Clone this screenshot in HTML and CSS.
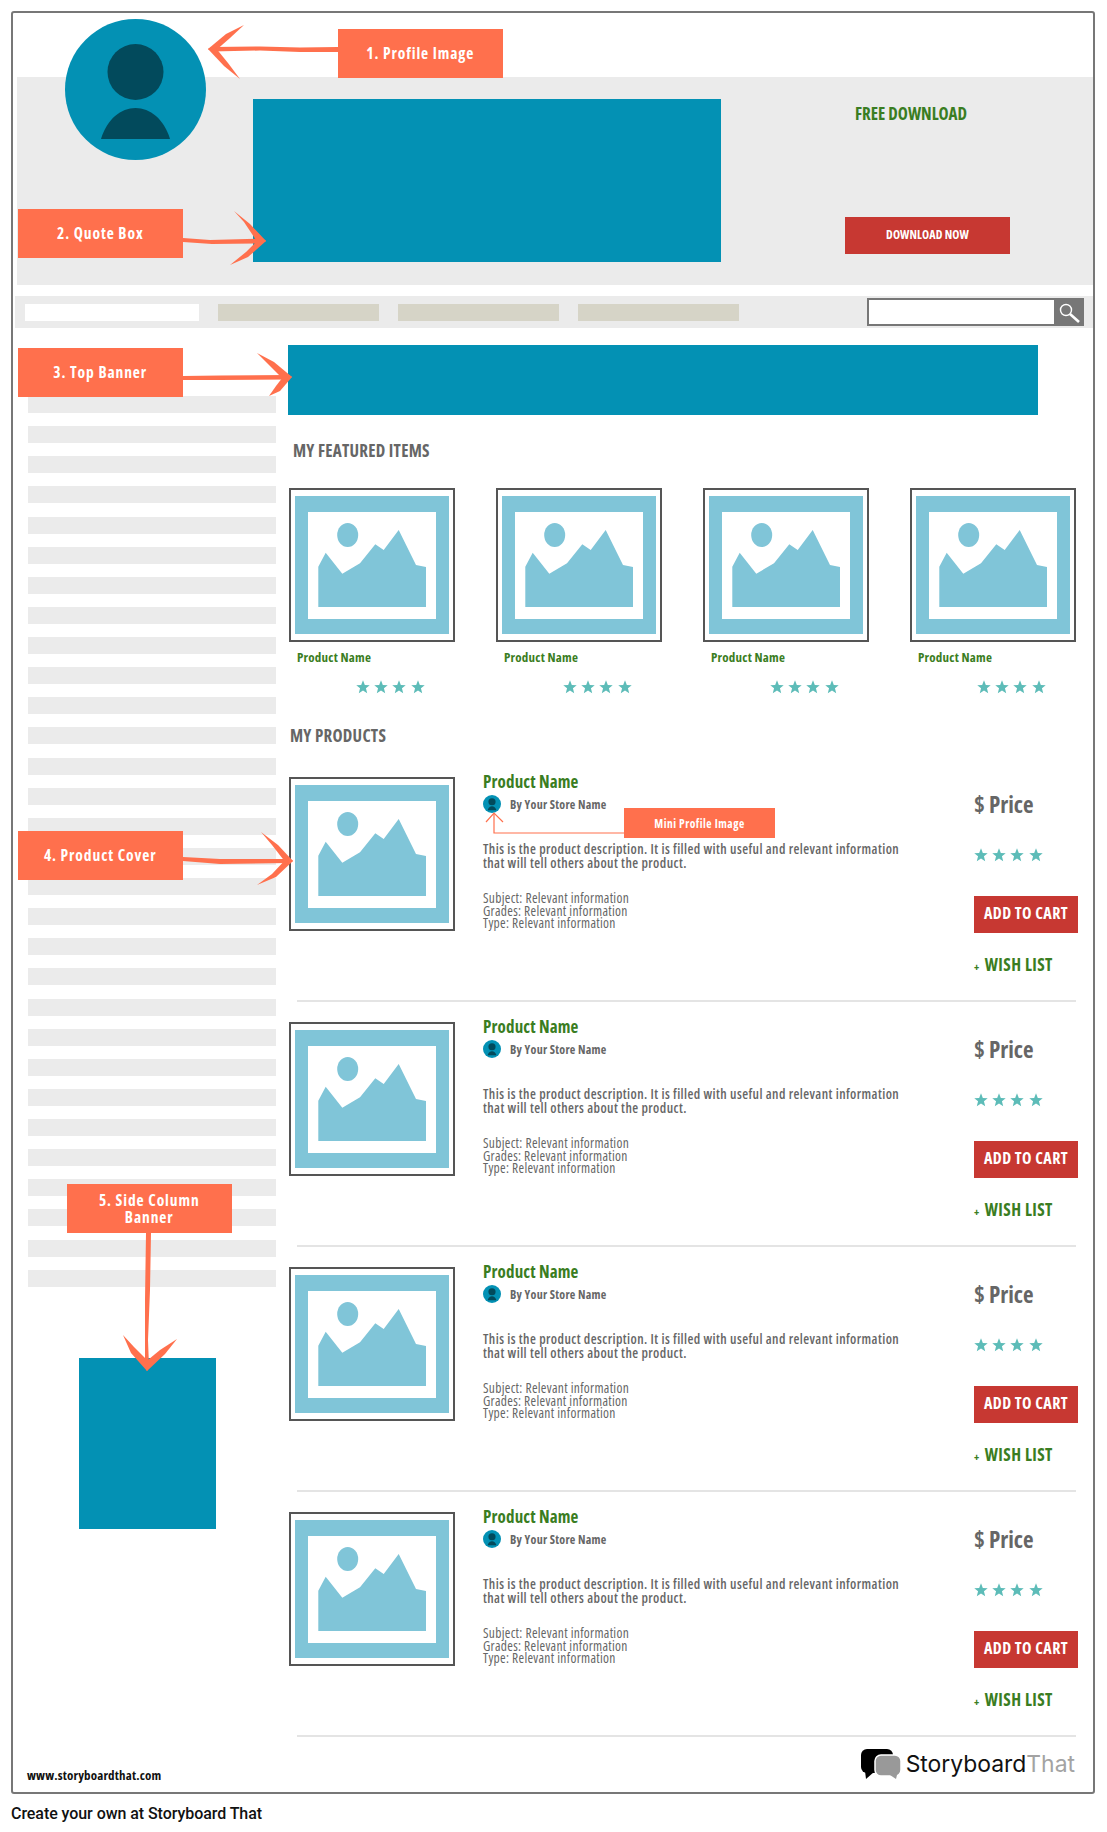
FILE: index.html
```html
<!DOCTYPE html>
<html lang="en">
<head>
    <meta charset="UTF-8">
    <title>Teacher Store Template</title>
    <link rel="stylesheet" href="styles.css">
</head>
<body>
    <svg class="defs" width="0" height="0">
        <symbol id="person" viewBox="0 0 141 141">
            <circle cx="70.5" cy="70.5" r="70.5" fill="#0391b4"/>
            <ellipse cx="70.5" cy="53" rx="28" ry="28" fill="#024a5c"/>
            <path d="M36 120 C42 100 56 89 70.5 89 C85 89 99 100 105 120 Z" fill="#024a5c"/>
        </symbol>
        <symbol id="picture" viewBox="0 0 154 138">
            <rect width="154" height="138" fill="#80c5d8"/>
            <rect x="13" y="16" width="128" height="107" fill="#fff"/>
            <ellipse cx="52.7" cy="39" rx="10.5" ry="12" fill="#80c5d8"/>
            <polygon points="23.3,70.7 30.7,56.7 47.3,77.7 65,67.3 80.3,48.3 88.7,54 103.7,34 121,69 131,71 131,111 23.3,111" fill="#80c5d8"/>
        </symbol>
        <symbol id="star" viewBox="0 0 20 20">
            <polygon points="10,0.5 12.6,7 19.6,7.4 14.2,11.9 16,18.9 10,15.1 4,18.9 5.8,11.9 0.4,7.4 7.4,7" fill="#5dbcb8"/>
        </symbol>
    </svg>

    <div class="page">
        <div class="frame">
            <div class="hero">
                <svg class="profile"><use href="#person"/></svg>
                <div class="quote"></div>
                <div class="offer">
                    <div class="offer-title">FREE DOWNLOAD</div>
                    <div class="download-btn">DOWNLOAD NOW</div>
                </div>
            </div>

            <div class="nav">
                <div class="nav-item nav-active"></div>
                <div class="nav-item"></div>
                <div class="nav-item"></div>
                <div class="nav-item"></div>
                <div class="search">
                    <div class="search-input"></div>
                    <div class="search-btn">
                        <svg width="28" height="28" viewBox="0 0 28 28">
                            <circle cx="10" cy="12" r="5.5" fill="none" stroke="#fff" stroke-width="1.4"/>
                            <line x1="14" y1="16" x2="23" y2="24" stroke="#fff" stroke-width="2.6"/>
                        </svg>
                    </div>
                </div>
            </div>

            <div class="main">
                <div class="side">
                    <div class="side-lines">
                        <div class="line"></div><div class="line"></div><div class="line"></div><div class="line"></div><div class="line"></div>
                        <div class="line"></div><div class="line"></div><div class="line"></div><div class="line"></div><div class="line"></div>
                        <div class="line"></div><div class="line"></div><div class="line"></div><div class="line"></div><div class="line"></div>
                        <div class="line"></div><div class="line"></div><div class="line"></div><div class="line"></div><div class="line"></div>
                        <div class="line"></div><div class="line"></div><div class="line"></div><div class="line"></div><div class="line"></div>
                        <div class="line"></div><div class="line"></div><div class="line"></div><div class="line"></div><div class="line"></div>
                    </div>
                    <div class="side-banner"></div>
                </div>

                <div class="content">
                    <div class="top-banner"></div>
                    <h2 class="section-title featured-title">MY FEATURED ITEMS</h2>

                    <div class="featured">
                        <div class="item">
                            <div class="cover"><svg><use href="#picture"/></svg></div>
                            <div class="item-name">Product Name</div>
                            <div class="stars item-stars"><svg><use href="#star"/></svg><svg><use href="#star"/></svg><svg><use href="#star"/></svg><svg><use href="#star"/></svg></div>
                        </div>
                        <div class="item">
                            <div class="cover"><svg><use href="#picture"/></svg></div>
                            <div class="item-name">Product Name</div>
                            <div class="stars item-stars"><svg><use href="#star"/></svg><svg><use href="#star"/></svg><svg><use href="#star"/></svg><svg><use href="#star"/></svg></div>
                        </div>
                        <div class="item">
                            <div class="cover"><svg><use href="#picture"/></svg></div>
                            <div class="item-name">Product Name</div>
                            <div class="stars item-stars"><svg><use href="#star"/></svg><svg><use href="#star"/></svg><svg><use href="#star"/></svg><svg><use href="#star"/></svg></div>
                        </div>
                        <div class="item">
                            <div class="cover"><svg><use href="#picture"/></svg></div>
                            <div class="item-name">Product Name</div>
                            <div class="stars item-stars"><svg><use href="#star"/></svg><svg><use href="#star"/></svg><svg><use href="#star"/></svg><svg><use href="#star"/></svg></div>
                        </div>
                    </div>

                    <h2 class="section-title products-title">MY PRODUCTS</h2>

                    <div class="products">
                        <div class="product">
                            <div class="cover"><svg><use href="#picture"/></svg></div>
                            <div class="product-body">
                                <div class="product-name">Product Name</div>
                                <div class="author"><svg><use href="#person"/></svg><span>By Your Store Name</span></div>
                                <p class="desc">This is the product description. It is filled with useful and relevant information<br>that will tell others about the product.</p>
                                <p class="meta">Subject: Relevant information<br>Grades: Relevant information<br>Type: Relevant information</p>
                            </div>
                            <div class="product-actions">
                                <div class="price">$ Price</div>
                                <div class="stars action-stars"><svg><use href="#star"/></svg><svg><use href="#star"/></svg><svg><use href="#star"/></svg><svg><use href="#star"/></svg></div>
                                <div class="cart-btn">ADD TO CART</div>
                                <div class="wish"><span class="plus">+</span> WISH LIST</div>
                            </div>
                        </div>
                        <div class="divider"></div>

                        <div class="product">
                            <div class="cover"><svg><use href="#picture"/></svg></div>
                            <div class="product-body">
                                <div class="product-name">Product Name</div>
                                <div class="author"><svg><use href="#person"/></svg><span>By Your Store Name</span></div>
                                <p class="desc">This is the product description. It is filled with useful and relevant information<br>that will tell others about the product.</p>
                                <p class="meta">Subject: Relevant information<br>Grades: Relevant information<br>Type: Relevant information</p>
                            </div>
                            <div class="product-actions">
                                <div class="price">$ Price</div>
                                <div class="stars action-stars"><svg><use href="#star"/></svg><svg><use href="#star"/></svg><svg><use href="#star"/></svg><svg><use href="#star"/></svg></div>
                                <div class="cart-btn">ADD TO CART</div>
                                <div class="wish"><span class="plus">+</span> WISH LIST</div>
                            </div>
                        </div>
                        <div class="divider"></div>

                        <div class="product">
                            <div class="cover"><svg><use href="#picture"/></svg></div>
                            <div class="product-body">
                                <div class="product-name">Product Name</div>
                                <div class="author"><svg><use href="#person"/></svg><span>By Your Store Name</span></div>
                                <p class="desc">This is the product description. It is filled with useful and relevant information<br>that will tell others about the product.</p>
                                <p class="meta">Subject: Relevant information<br>Grades: Relevant information<br>Type: Relevant information</p>
                            </div>
                            <div class="product-actions">
                                <div class="price">$ Price</div>
                                <div class="stars action-stars"><svg><use href="#star"/></svg><svg><use href="#star"/></svg><svg><use href="#star"/></svg><svg><use href="#star"/></svg></div>
                                <div class="cart-btn">ADD TO CART</div>
                                <div class="wish"><span class="plus">+</span> WISH LIST</div>
                            </div>
                        </div>
                        <div class="divider"></div>

                        <div class="product">
                            <div class="cover"><svg><use href="#picture"/></svg></div>
                            <div class="product-body">
                                <div class="product-name">Product Name</div>
                                <div class="author"><svg><use href="#person"/></svg><span>By Your Store Name</span></div>
                                <p class="desc">This is the product description. It is filled with useful and relevant information<br>that will tell others about the product.</p>
                                <p class="meta">Subject: Relevant information<br>Grades: Relevant information<br>Type: Relevant information</p>
                            </div>
                            <div class="product-actions">
                                <div class="price">$ Price</div>
                                <div class="stars action-stars"><svg><use href="#star"/></svg><svg><use href="#star"/></svg><svg><use href="#star"/></svg><svg><use href="#star"/></svg></div>
                                <div class="cart-btn">ADD TO CART</div>
                                <div class="wish"><span class="plus">+</span> WISH LIST</div>
                            </div>
                        </div>
                        <div class="divider last"></div>
                    </div>
                </div>
            </div>

            <div class="footer">
                <div class="site">www.storyboardthat.com</div>
                <div class="logo">
                    <svg width="40" height="30" viewBox="0 0 40 30">
                        <rect x="0" y="0" width="32" height="24" rx="6" fill="#000"/>
                        <polygon points="4,22 5,30 13,23" fill="#000"/>
                        <rect x="14" y="6" width="26" height="21" rx="6" fill="#999" stroke="#fff" stroke-width="1.5"/>
                        <polygon points="29,26 35,30 36,26" fill="#999"/>
                    </svg>
                    <span class="logo-text">Storyboard<span class="logo-that">That</span></span>
                </div>
            </div>
        </div>

        <div class="caption">Create your own at Storyboard That</div>

        <!-- hand drawn arrows sit over the template -->
        <svg class="arrows" width="1107" height="1832" viewBox="0 0 1107 1832">
            <g fill="#ff704d">
                <polygon points="338,47 300,47.5 260,46.5 212,47 208,49 212,51.5 260,50.5 300,52 338,52"/>
                <polygon points="208,49 226,34 244,25 230,38 214,52"/>
                <polygon points="208,49 215,47 228,63 240,79 224,66"/>

                <polygon points="183,238 210,240 262,238.5 266,241 262,243.5 212,244 183,242"/>
                <polygon points="266,241 258,243 244,222 234,211 250,224"/>
                <polygon points="266,241 261,237 246,252 230,265 248,257"/>

                <polygon points="183,376 220,375.5 288,375 292,377 288,379.5 220,380 183,380"/>
                <polygon points="292,377 284,380 268,364 257,353 274,362"/>
                <polygon points="292,377 286,373 276,386 269,396 280,391"/>

                <polygon points="183,857 220,859 289,859 293,861 289,863 220,864 183,861"/>
                <polygon points="293,861 286,863 272,845 261,832 278,845"/>
                <polygon points="293,861 288,857 272,874 257,885 276,877"/>

                <polygon points="146,1233 151,1233 150,1290 148,1340 149,1366 147,1371 145,1366 145,1300"/>
                <polygon points="147,1371 151,1364 134,1347 123,1335 131,1353"/>
                <polygon points="147,1371 143,1364 160,1350 177,1339 165,1354"/>
            </g>
            <polyline points="624,833 494,833 494,814" fill="none" stroke="#ff704d" stroke-width="1.2"/>
            <polyline points="486,822 494,813 503,822" fill="none" stroke="#ff704d" stroke-width="1.2"/>
        </svg>

        <div class="callout callout-profile">1. Profile Image</div>
        <div class="callout callout-quote">2. Quote Box</div>
        <div class="callout callout-banner">3. Top Banner</div>
        <div class="callout callout-cover">4. Product Cover</div>
        <div class="callout callout-side">5. Side Column<br>Banner</div>
        <div class="callout callout-mini">Mini Profile Image</div>
    </div>
</body>
</html>
```

FILE: styles.css
```css
body {
    margin: 0;
    background-color: white;
    font-family: "Open Sans", "Liberation Sans", sans-serif;
    font-stretch: 75%;
    color: #666;
}
.defs {
    position: absolute;
}
.page {
    position: relative;
    width: 1107px;
    height: 1832px;
    overflow: hidden;
    padding-top: 11px;
    box-sizing: border-box;
}
.frame {
    display: flex;
    flex-direction: column;
    box-sizing: border-box;
    width: 1084px;
    height: 1783px;
    margin-left: 11px;
    border: 2px solid #777;
    border-radius: 3px;
}

.hero {
    display: flex;
    align-items: flex-start;
    height: 208px;
    margin: 64px 0 0 4px;
    background-color: #ebebeb;
}
.profile {
    flex: none;
    width: 141px;
    height: 141px;
    margin: -58px 0 0 48px;
}
.quote {
    flex: none;
    width: 468px;
    height: 163px;
    margin: 22px 0 0 47px;
    background-color: #0391b4;
}
.offer {
    width: 165px;
    margin-left: 124px;
}
.offer-title {
    margin: 27px 0 0 10px;
    font-size: 17px;
    line-height: 20px;
    font-weight: bold;
    color: #3a7d22;
    white-space: nowrap;
}
.download-btn {
    height: 37px;
    margin-top: 93px;
    background-color: #c73832;
    color: white;
    font-size: 12px;
    font-weight: bold;
    line-height: 36px;
    text-align: center;
    letter-spacing: 0.1px;
}

.nav {
    display: flex;
    align-items: center;
    box-sizing: border-box;
    height: 32px;
    margin: 11px 0 0 2px;
    padding: 0 9.5px 0 10px;
    background-color: #ebebeb;
}
.nav-item {
    width: 161px;
    height: 17px;
    margin-left: 19px;
    background-color: #d6d4c7;
}
.nav-active {
    width: 174px;
    margin-left: 0;
    background-color: white;
}
.search {
    display: flex;
    height: 28px;
    margin-left: auto;
}
.search-input {
    box-sizing: border-box;
    width: 188.5px;
    border: 2px solid #777;
    background-color: white;
}
.search-btn {
    width: 28px;
    background-color: #777;
}

.main {
    display: flex;
    flex: none;
    padding-top: 17px;
}
.side {
    flex: none;
    width: 248px;
    margin-left: 15px;
    padding-top: 51px;
}
.side-lines {
    display: flex;
    flex-direction: column;
    gap: 13.14px;
}
.line {
    height: 17px;
    background-color: #ebebeb;
}
.side-banner {
    width: 137px;
    height: 171px;
    margin: 71px 0 0 51px;
    background-color: #0391b4;
}

.content {
    flex: none;
    width: 800px;
    margin-left: 12px;
}
.top-banner {
    width: 750px;
    height: 70px;
    background-color: #0391b4;
}
.section-title {
    margin: 0;
    font-size: 17px;
    line-height: 21px;
    font-weight: bold;
    letter-spacing: 0.25px;
    color: #666;
}
.featured-title {
    margin: 25px 0 0 5px;
}
.products-title {
    margin: 31px 0 0 2px;
}

.featured {
    display: flex;
    gap: 41px;
    margin: 27px 0 0 1px;
}
.cover {
    flex: none;
    box-sizing: border-box;
    width: 166px;
    height: 154px;
    padding: 6px 4px;
    border: 2px solid #555;
}
.cover svg {
    display: block;
    width: 154px;
    height: 138px;
}
.item {
    width: 166px;
}
.item-name {
    margin-top: 7px;
    padding-left: 8px;
    font-size: 13px;
    line-height: 16px;
    font-weight: bold;
    letter-spacing: 0.2px;
    color: #3a7d22;
}
.stars {
    display: flex;
    gap: 4.2px;
}
.stars svg {
    width: 14px;
    height: 14px;
}
.item-stars {
    margin: 15px 0 0 67px;
}

.products {
    margin: 31px 0 0 1px;
}
.product {
    display: flex;
    height: 223px;
}
.product-body {
    width: 491px;
    margin: -4px 0 0 28px;
}
.product-name {
    font-size: 17px;
    line-height: 18px;
    font-weight: bold;
    color: #3a7d22;
    letter-spacing: 0.15px;
}
.author {
    display: flex;
    align-items: center;
    gap: 9px;
    margin-top: 4px;
    font-size: 12px;
    font-weight: bold;
    letter-spacing: 0.26px;
}
.author svg {
    width: 18px;
    height: 18px;
}
.desc {
    margin: 29px 0 0;
    font-size: 13.5px;
    line-height: 14px;
    font-weight: 600;
    letter-spacing: 0.42px;
}
.meta {
    margin: 22px 0 0;
    font-size: 13.5px;
    line-height: 12.5px;
    font-weight: 500;
    letter-spacing: 0.3px;
}
.product-actions {
    width: 104px;
}
.price {
    margin-top: 14px;
    font-size: 23px;
    line-height: 26px;
    font-weight: bold;
}
.action-stars {
    margin-top: 31px;
}
.cart-btn {
    height: 37px;
    margin-top: 34px;
    background-color: #c73832;
    color: white;
    font-size: 16px;
    font-weight: bold;
    line-height: 35px;
    text-align: center;
    letter-spacing: 0.4px;
    white-space: nowrap;
}
.wish {
    margin-top: 23px;
    font-size: 17px;
    line-height: 18px;
    font-weight: bold;
    letter-spacing: 0.45px;
    color: #3a7d22;
    white-space: nowrap;
}
.plus {
    margin-right: 1.5px;
    font-size: 11px;
}
.divider {
    width: 779px;
    height: 2px;
    margin: 0 0 20px 8px;
    background-color: #e4e4e4;
}
.divider.last {
    margin-bottom: 0;
}

.footer {
    display: flex;
    justify-content: space-between;
    height: 43px;
    margin-top: auto;
    padding: 0 18px 0 14px;
}
.site {
    align-self: flex-end;
    margin-bottom: 10px;
    font-size: 13px;
    line-height: 14px;
    font-weight: bold;
    letter-spacing: 0.16px;
    color: #111;
}
.logo {
    display: flex;
    align-items: flex-start;
    gap: 5px;
}
.logo-text {
    font-family: Inter, "Open Sans", sans-serif;
    font-stretch: 100%;
    font-size: 22.9px;
    line-height: 30px;
    color: #111;
}
.logo-that {
    color: #a3a3a3;
}
.caption {
    margin: 10px 0 0 11px;
    font-family: Roboto, "Liberation Sans", sans-serif;
    font-stretch: 100%;
    font-size: 16px;
    line-height: 20px;
    font-weight: 500;
    letter-spacing: -0.06px;
    color: #111;
}

/* annotations over the template */
.arrows {
    position: absolute;
    top: 0;
    left: 0;
}
.callout {
    position: absolute;
    display: flex;
    align-items: center;
    justify-content: center;
    box-sizing: border-box;
    width: 165.5px;
    height: 49.5px;
    background-color: #ff704d;
    color: white;
    font-size: 15.5px;
    line-height: 17px;
    font-weight: bold;
    text-align: center;
    letter-spacing: 0.9px;
}
.callout-profile { left: 337.5px; top: 28.5px; }
.callout-quote { left: 17.5px; top: 208.5px; }
.callout-banner { left: 17.5px; top: 347.5px; }
.callout-cover { left: 17.5px; top: 830.5px; }
.callout-side { left: 66.5px; top: 1183.5px; padding-top: 1px; }
.callout-mini {
    left: 624px;
    top: 808px;
    width: 151px;
    height: 30px;
    font-size: 11.5px;
    letter-spacing: 0.5px;
}
```
